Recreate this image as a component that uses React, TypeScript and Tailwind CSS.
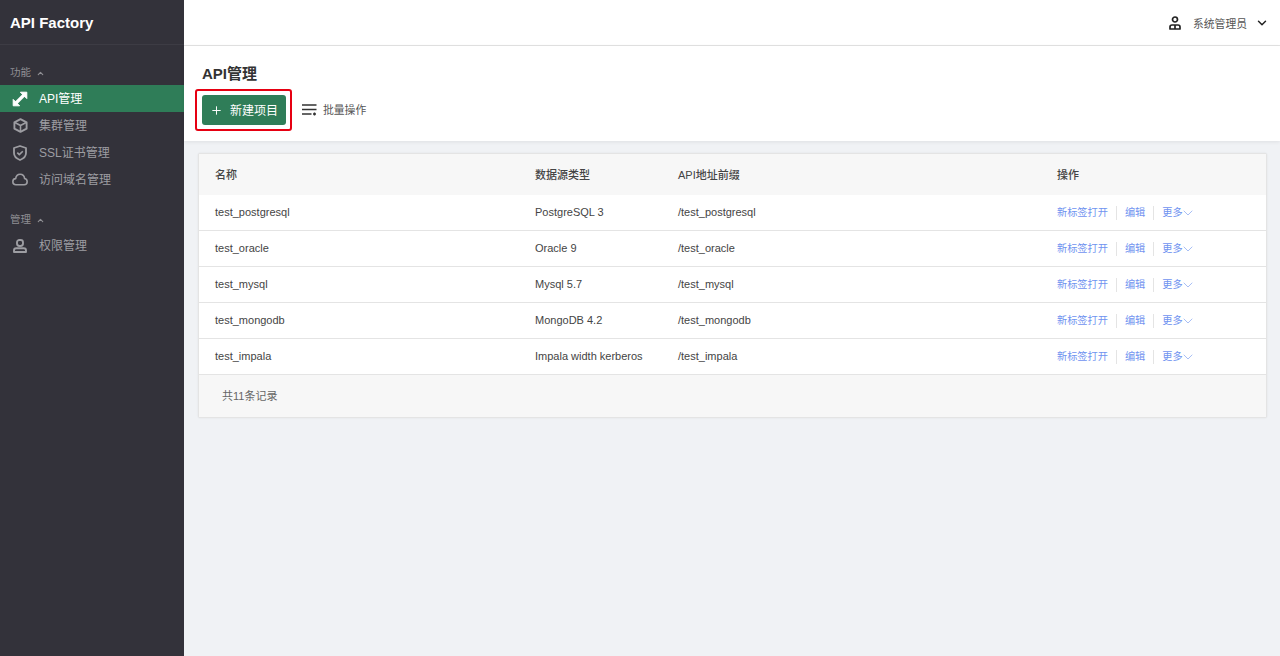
import { ChevronDown, ChevronUp, Plus } from 'lucide-react'
import type { ReactNode } from 'react'

const rows = [
  { name: 'test_postgresql', type: 'PostgreSQL 3', prefix: '/test_postgresql' },
  { name: 'test_oracle', type: 'Oracle 9', prefix: '/test_oracle' },
  { name: 'test_mysql', type: 'Mysql 5.7', prefix: '/test_mysql' },
  { name: 'test_mongodb', type: 'MongoDB 4.2', prefix: '/test_mongodb' },
  { name: 'test_impala', type: 'Impala width kerberos', prefix: '/test_impala' },
]

const IconApi = () => (
  <svg width="16" height="16" viewBox="0 0 16 16" fill="currentColor">
    <path d="M4 12 12 4" stroke="currentColor" strokeWidth="3.200" />
    <path d="M8.400 1.200h6.400v6.400Z" stroke="currentColor" strokeWidth="1" strokeLinejoin="round" />
    <path d="M1.200 8.400v6.400h6.400Z" stroke="currentColor" strokeWidth="1" strokeLinejoin="round" />
  </svg>
)

const IconBox = () => (
  <svg width="15" height="15" viewBox="0 0 16 16" fill="none" stroke="currentColor" strokeWidth="2" strokeLinejoin="round">
    <path d="M8 1.200 14.500 4.600v6.800L8 14.800 1.500 11.400V4.600Z" />
    <path d="M2 4.800 8 8l6-3.200M8 8v6.500" strokeWidth="1.700" />
  </svg>
)

const IconShield = () => (
  <svg width="14" height="16" viewBox="0 0 14 16" fill="none" stroke="currentColor" strokeWidth="1.800" strokeLinejoin="round">
    <path d="M7 1 13 3v5c0 3.300-2.500 5.600-6 7-3.500-1.400-6-3.700-6-7V3Z" />
    <path d="M4.300 7.600 6.300 9.600 9.800 6.200" strokeWidth="1.600" />
  </svg>
)

const IconCloud = () => (
  <svg width="17" height="13" viewBox="0 0 17 13" fill="none" stroke="currentColor" strokeWidth="1.700" strokeLinejoin="round">
    <path d="M4.200 12C2.200 12 .9 10.600.9 8.800c0-1.700 1.300-3.100 3-3.200C4.300 3 6.200.9 8.600.9c2.500 0 4.500 2 4.800 4.600 1.600.3 2.700 1.600 2.700 3.300 0 1.800-1.400 3.200-3.200 3.200Z" />
  </svg>
)

const IconUser = ({ className }: { className?: string }) => (
  <svg className={className} width="14" height="14" viewBox="0 0 14 14" fill="none" stroke="currentColor" strokeWidth="1.900" strokeLinejoin="round">
    <rect x="4" y="1" width="6" height="6" rx="2.400" />
    <path d="M1 13v-1.600C1 10 2 9.200 3.200 9.200h7.600C12 9.200 13 10 13 11.400V13Z" />
  </svg>
)

const IconAdmin = ({ className }: { className?: string }) => (
  <svg className={className} width="12" height="14" viewBox="0 0 12 14" fill="none" stroke="currentColor" strokeWidth="1.700" strokeLinejoin="round">
    <circle cx="6" cy="3.500" r="2.500" />
    <path d="M1 13v-2c0-1.200.8-2 2-2h6c1.200 0 2 .8 2 2v2ZM6 9v4" />
  </svg>
)

const IconBatch = () => (
  <svg width="15" height="12" viewBox="0 0 15 12" fill="none" stroke="#333" strokeWidth="1.500">
    <path d="M0 1h14.500M0 5.500h14.500M0 10h9.500" />
    <path d="M11 10h3M12.500 8.500v3" strokeWidth="1.400" />
  </svg>
)

const SideItem = ({ icon, label, active }: { icon: ReactNode; label: string; active?: boolean }) => (
  <div
    className={`flex items-center h-[27px] pl-[12px] text-[12px] ${
      active ? 'bg-[#2f7d58] text-white' : 'text-[#9d9da2]'
    }`}
  >
    <span className="flex items-center justify-center w-[16px] mr-[11px]">{icon}</span>
    {label}
  </div>
)

const SideLabel = ({ label }: { label: string }) => (
  <div className="flex items-center h-[27px] pt-[3px] pl-[10px] text-[10.500px] text-[#8f8f94]">
    {label}
    <ChevronUp size={9} strokeWidth={3} className="ml-[5px]" />
  </div>
)

const Cols = ({ children, className }: { children: ReactNode[]; className: string }) => (
  <div className={`grid grid-cols-[320px_143px_379px_1fr] pl-[16px] items-center ${className}`}>{children}</div>
)

const App = () => {
  return (
    <div className="flex w-[1280px] h-[656px] overflow-hidden bg-[#f0f2f5] font-['Liberation_Sans','Noto_Sans_CJK_SC',sans-serif]">
      <aside className="w-[184px] shrink-0 bg-[#33323a]">
        <div className="flex items-center h-[45px] pl-[10px] pt-[2px] border-b border-[#3d3c44] text-[15px] font-bold text-white">
          API Factory
        </div>
        <div className="pt-[13px]">
          <SideLabel label="功能" />
          <SideItem icon={<IconApi />} label="API管理" active />
          <SideItem icon={<IconBox />} label="集群管理" />
          <SideItem icon={<IconShield />} label="SSL证书管理" />
          <SideItem icon={<IconCloud />} label="访问域名管理" />
        </div>
        <div className="pt-[12px]">
          <SideLabel label="管理" />
          <SideItem icon={<IconUser />} label="权限管理" />
        </div>
      </aside>

      <main className="flex-1 flex flex-col min-w-0">
        <header className="flex items-center justify-end h-[46px] pr-[11px] bg-white border-b border-[#e3e3e3]">
          <IconAdmin className="text-[#222] mr-[12px]" />
          <span className="mt-[3px] text-[10.800px] text-[#555]">系统管理员</span>
          <ChevronDown size={14} strokeWidth={2.500} className="ml-[8px] text-[#222]" />
        </header>

        <section className="h-[95px] pl-[18px] pt-[17px] bg-white shadow-[0_1px_4px_rgba(0,0,0,0.08)]">
          <h1 className="text-[15px] leading-[22px] font-bold text-[#333]">API管理</h1>
          <div className="flex items-center mt-[4px] -ml-[7px]">
            <div className="pl-[5px] pr-[4px] py-[4px] border-2 border-[#e60012] rounded-[3px]">
              <button className="flex items-center w-[84px] h-[30px] pl-[8px] bg-[#2f7d58] rounded-[3px] text-[12px] text-white">
                <Plus size={13} strokeWidth={1.800} className="mr-[7px]" />
                <span className="pt-[2px]">新建项目</span>
              </button>
            </div>
            <div className="flex items-center ml-[10px] text-[10.800px] text-[#555]">
              <IconBatch />
              <span className="ml-[6px] pt-[1px]">批量操作</span>
            </div>
          </div>
        </section>

        <section className="pt-[12px] pl-[14px] pr-[13px]">
          <div className="bg-white border border-[#e4e4e4] rounded-[2px] shadow-[0_0_2px_rgba(0,0,0,0.08)] text-[11px] text-[#444]">
            <Cols className="h-[41px] pt-[2px] bg-[#f7f7f7] font-medium">
              <span>名称</span>
              <span>数据源类型</span>
              <span>API地址前缀</span>
              <span>操作</span>
            </Cols>
            {rows.map((row) => (
              <Cols key={row.name} className="h-[36px] border-b border-[#e4e4e4]">
                <span>{row.name}</span>
                <span>{row.type}</span>
                <span>{row.prefix}</span>
                <span className="flex items-center pt-[1px] text-[#6f93f0] text-[10.200px]">
                  新标签打开
                  <i className="w-px h-[14px] mx-[8px] bg-[#e4e4e4]" />
                  编辑
                  <i className="w-px h-[14px] mx-[8px] bg-[#e4e4e4]" />
                  更多
                  <ChevronDown size={16} strokeWidth={1.200} className="-ml-[3px] text-[#93aef2]" />
                </span>
              </Cols>
            ))}
            <div className="flex items-center h-[42px] pt-[1px] pl-[23px] bg-[#f7f7f7] text-[#666]">共11条记录</div>
          </div>
        </section>
      </main>
    </div>
  )
}

export default App
